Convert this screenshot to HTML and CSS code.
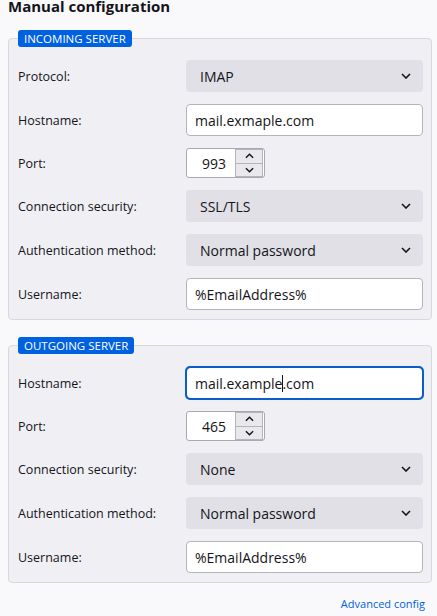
FILE: index.html
```html
<!DOCTYPE html>
<html lang="en">
<head>
<meta charset="utf-8">
<title>Manual configuration</title>
<link rel="stylesheet" href="styles.css">
</head>
<body>
<div class="page">
  <h2 class="title">Manual configuration</h2>

  <section class="group">
    <div class="badge-row"><span class="badge">INCOMING SERVER</span></div>
    <div class="grid">
      <span class="label">Protocol:</span>
      <div class="select"><span>IMAP</span><svg class="chev" viewBox="0 0 10 6"><path d="M1 1l4 4 4-4"/></svg></div>

      <span class="label">Hostname:</span>
      <div class="field">mail.exmaple.com</div>

      <span class="label">Port:</span>
      <div class="spin"><span class="num">993</span><span class="btns"><span class="b up"><svg viewBox="0 0 10 6"><path d="M1 5l4-4 4 4"/></svg></span><span class="b"><svg viewBox="0 0 10 6"><path d="M1 1l4 4 4-4"/></svg></span></span></div>

      <span class="label">Connection security:</span>
      <div class="select"><span>SSL/TLS</span><svg class="chev" viewBox="0 0 10 6"><path d="M1 1l4 4 4-4"/></svg></div>

      <span class="label">Authentication method:</span>
      <div class="select"><span>Normal password</span><svg class="chev" viewBox="0 0 10 6"><path d="M1 1l4 4 4-4"/></svg></div>

      <span class="label">Username:</span>
      <div class="field">%EmailAddress%</div>
    </div>
  </section>

  <section class="group second">
    <div class="badge-row"><span class="badge">OUTGOING SERVER</span></div>
    <div class="grid">
      <span class="label">Hostname:</span>
      <div class="field focused">mail.example<span class="caret"></span>.com</div>

      <span class="label">Port:</span>
      <div class="spin"><span class="num">465</span><span class="btns"><span class="b up"><svg viewBox="0 0 10 6"><path d="M1 5l4-4 4 4"/></svg></span><span class="b"><svg viewBox="0 0 10 6"><path d="M1 1l4 4 4-4"/></svg></span></span></div>

      <span class="label">Connection security:</span>
      <div class="select"><span>None</span><svg class="chev" viewBox="0 0 10 6"><path d="M1 1l4 4 4-4"/></svg></div>

      <span class="label">Authentication method:</span>
      <div class="select"><span>Normal password</span><svg class="chev" viewBox="0 0 10 6"><path d="M1 1l4 4 4-4"/></svg></div>

      <span class="label">Username:</span>
      <div class="field">%EmailAddress%</div>
    </div>
  </section>

  <div class="footer"><a class="link" href="#">Advanced config</a></div>
</div>
</body>
</html>
```
FILE: styles.css
```css
html, body {
  margin: 0;
  background: #f9f9fb;
}
body {
  font-family: "Open Sans", "Noto Sans", sans-serif;
  color: #15141a;
  overflow: hidden;
}
.page {
  padding: 0 5px 0 8px;
}
.title {
  margin: -3px 0 0;
  font-size: 15px;
  font-weight: 700;
  line-height: 18px;
}
.group {
  margin-top: 23px;
  border: 1px solid #d8d8dc;
  border-radius: 4px;
  background: #f0f0f4;
  padding: 0 8px 9px 9px;
}
.group.second {
  margin-top: 25px;
}
.badge-row {
  display: flex;
  margin-top: -9px;
}
.badge {
  height: 17px;
  line-height: 17px;
  padding: 0 6px;
  background: #0061e0;
  color: #fff;
  font-size: 11.5px;
  border-radius: 3px;
}
.grid {
  margin-top: 13px;
  display: grid;
  grid-template-columns: 168px 1fr;
  row-gap: 12px;
  align-items: center;
}
.label {
  font-size: 12.5px;
}
.select, .field {
  height: 32px;
  box-sizing: border-box;
  border-radius: 4px;
  font-size: 14px;
  display: flex;
  align-items: center;
}
.select {
  background: #e0e0e6;
  padding: 0 12px 0 14px;
  justify-content: space-between;
}
.chev {
  width: 10px;
  height: 6px;
  fill: none;
  stroke: #15141a;
  stroke-width: 1.6;
}
.field {
  background: #fff;
  border: 1px solid #b4b4bc;
  padding: 0 8px;
}
.field.focused {
  border-color: #0a5ec9;
  outline: 2px solid #0a5ec9;
  outline-offset: -1px;
}
.caret {
  display: inline-block;
  width: 1px;
  height: 17px;
  background: #15141a;
  margin: 0 -1px 0 0;
}
.spin {
  width: 79px;
  height: 30px;
  box-sizing: border-box;
  border: 1px solid #a9a9b1;
  border-radius: 3px;
  background: #fff;
  display: flex;
  align-items: stretch;
  font-size: 14px;
}
.num {
  flex: 1;
  display: flex;
  align-items: center;
  justify-content: flex-end;
  padding-right: 9px;
}
.btns {
  width: 28px;
  margin: 0 1px 0 0;
  border: 1px solid #b4b4bc;
  box-sizing: border-box;
  background: #e9e9ed;
  display: flex;
  flex-direction: column;
}
.b {
  flex: 1;
  display: flex;
  align-items: center;
  justify-content: center;
}
.b.up {
  border-bottom: 1px solid #b4b4bc;
}
.b svg {
  width: 9px;
  height: 6px;
  fill: none;
  stroke: #15141a;
  stroke-width: 1.6;
}
.footer {
  margin-top: 13px;
  display: flex;
  justify-content: flex-end;
  padding-right: 7px;
}
.link {
  font-size: 11px;
  color: #0061e0;
  text-decoration: none;
}
```
